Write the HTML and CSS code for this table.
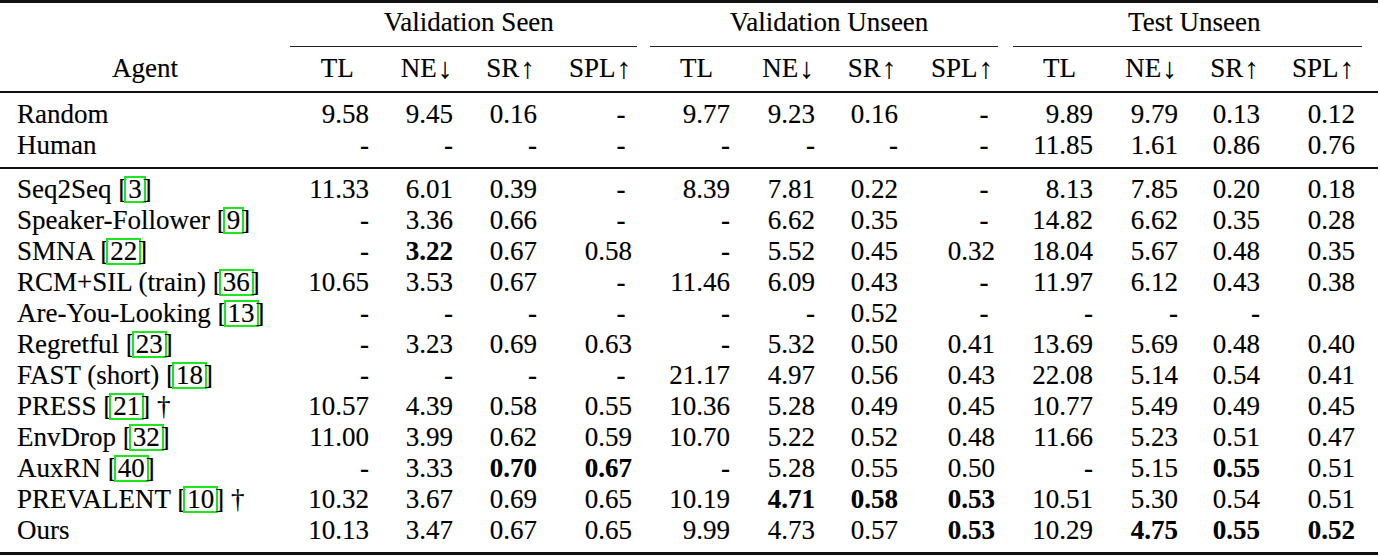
FILE: index.html
```html
<!DOCTYPE html>
<html lang="en">
<head>
<meta charset="utf-8">
<title>Results table</title>
<link rel="stylesheet" href="styles.css">
</head>
<body>
<div class="tbl">
  <div class="thead">
    <div class="row r-groups">
      <div class="a"></div>
      <div class="g g1">Validation Seen</div>
      <div class="g g2">Validation Unseen</div>
      <div class="g g3">Test Unseen</div>
    </div>
    <div class="row r-cmid">
      <div class="cm cm1"></div>
      <div class="cm cm2"></div>
      <div class="cm cm3"></div>
    </div>
    <div class="row r-cols">
      <div class="a ah">Agent</div>
      <div class="h">TL</div><div class="h">NE<span class="arr">↓</span></div><div class="h">SR<span class="arr">↑</span></div><div class="h">SPL<span class="arr">↑</span></div>
      <div class="h">TL</div><div class="h">NE<span class="arr">↓</span></div><div class="h">SR<span class="arr">↑</span></div><div class="h">SPL<span class="arr">↑</span></div>
      <div class="h">TL</div><div class="h">NE<span class="arr">↓</span></div><div class="h">SR<span class="arr">↑</span></div><div class="h l">SPL<span class="arr">↑</span></div>
    </div>
  </div>

  <div class="tbody base">
    <div class="row">
      <div class="a">Random</div>
      <div class="n">9.58</div><div class="n">9.45</div><div class="n">0.16</div><div class="n d">-</div>
      <div class="n">9.77</div><div class="n">9.23</div><div class="n">0.16</div><div class="n d">-</div>
      <div class="n">9.89</div><div class="n">9.79</div><div class="n">0.13</div><div class="n l">0.12</div>
    </div>
    <div class="row">
      <div class="a">Human</div>
      <div class="n">-</div><div class="n">-</div><div class="n">-</div><div class="n d">-</div>
      <div class="n">-</div><div class="n">-</div><div class="n">-</div><div class="n d">-</div>
      <div class="n">11.85</div><div class="n">1.61</div><div class="n">0.86</div><div class="n l">0.76</div>
    </div>
  </div>

  <div class="tbody methods">
    <div class="row">
      <div class="a">Seq2Seq [<span class="cite">3</span>]</div>
      <div class="n">11.33</div><div class="n">6.01</div><div class="n">0.39</div><div class="n d">-</div>
      <div class="n">8.39</div><div class="n">7.81</div><div class="n">0.22</div><div class="n d">-</div>
      <div class="n">8.13</div><div class="n">7.85</div><div class="n">0.20</div><div class="n l">0.18</div>
    </div>
    <div class="row">
      <div class="a">Speaker-Follower [<span class="cite">9</span>]</div>
      <div class="n">-</div><div class="n">3.36</div><div class="n">0.66</div><div class="n d">-</div>
      <div class="n">-</div><div class="n">6.62</div><div class="n">0.35</div><div class="n d">-</div>
      <div class="n">14.82</div><div class="n">6.62</div><div class="n">0.35</div><div class="n l">0.28</div>
    </div>
    <div class="row">
      <div class="a">SMNA [<span class="cite">22</span>]</div>
      <div class="n">-</div><div class="n"><b>3.22</b></div><div class="n">0.67</div><div class="n">0.58</div>
      <div class="n">-</div><div class="n">5.52</div><div class="n">0.45</div><div class="n">0.32</div>
      <div class="n">18.04</div><div class="n">5.67</div><div class="n">0.48</div><div class="n l">0.35</div>
    </div>
    <div class="row">
      <div class="a">RCM+SIL (train) [<span class="cite">36</span>]</div>
      <div class="n">10.65</div><div class="n">3.53</div><div class="n">0.67</div><div class="n d">-</div>
      <div class="n">11.46</div><div class="n">6.09</div><div class="n">0.43</div><div class="n d">-</div>
      <div class="n">11.97</div><div class="n">6.12</div><div class="n">0.43</div><div class="n l">0.38</div>
    </div>
    <div class="row">
      <div class="a">Are-You-Looking [<span class="cite">13</span>]</div>
      <div class="n">-</div><div class="n">-</div><div class="n">-</div><div class="n d">-</div>
      <div class="n">-</div><div class="n">-</div><div class="n">0.52</div><div class="n d">-</div>
      <div class="n">-</div><div class="n">-</div><div class="n">-</div><div class="n l"></div>
    </div>
    <div class="row">
      <div class="a">Regretful [<span class="cite">23</span>]</div>
      <div class="n">-</div><div class="n">3.23</div><div class="n">0.69</div><div class="n">0.63</div>
      <div class="n">-</div><div class="n">5.32</div><div class="n">0.50</div><div class="n">0.41</div>
      <div class="n">13.69</div><div class="n">5.69</div><div class="n">0.48</div><div class="n l">0.40</div>
    </div>
    <div class="row">
      <div class="a">FAST (short) [<span class="cite">18</span>]</div>
      <div class="n">-</div><div class="n">-</div><div class="n">-</div><div class="n d">-</div>
      <div class="n">21.17</div><div class="n">4.97</div><div class="n">0.56</div><div class="n">0.43</div>
      <div class="n">22.08</div><div class="n">5.14</div><div class="n">0.54</div><div class="n l">0.41</div>
    </div>
    <div class="row">
      <div class="a">PRESS [<span class="cite">21</span>] †</div>
      <div class="n">10.57</div><div class="n">4.39</div><div class="n">0.58</div><div class="n">0.55</div>
      <div class="n">10.36</div><div class="n">5.28</div><div class="n">0.49</div><div class="n">0.45</div>
      <div class="n">10.77</div><div class="n">5.49</div><div class="n">0.49</div><div class="n l">0.45</div>
    </div>
    <div class="row">
      <div class="a">EnvDrop [<span class="cite">32</span>]</div>
      <div class="n">11.00</div><div class="n">3.99</div><div class="n">0.62</div><div class="n">0.59</div>
      <div class="n">10.70</div><div class="n">5.22</div><div class="n">0.52</div><div class="n">0.48</div>
      <div class="n">11.66</div><div class="n">5.23</div><div class="n">0.51</div><div class="n l">0.47</div>
    </div>
    <div class="row">
      <div class="a">AuxRN [<span class="cite">40</span>]</div>
      <div class="n">-</div><div class="n">3.33</div><div class="n"><b>0.70</b></div><div class="n"><b>0.67</b></div>
      <div class="n">-</div><div class="n">5.28</div><div class="n">0.55</div><div class="n">0.50</div>
      <div class="n">-</div><div class="n">5.15</div><div class="n"><b>0.55</b></div><div class="n l">0.51</div>
    </div>
    <div class="row">
      <div class="a">PREVALENT [<span class="cite">10</span>] †</div>
      <div class="n">10.32</div><div class="n">3.67</div><div class="n">0.69</div><div class="n">0.65</div>
      <div class="n">10.19</div><div class="n"><b>4.71</b></div><div class="n"><b>0.58</b></div><div class="n"><b>0.53</b></div>
      <div class="n">10.51</div><div class="n">5.30</div><div class="n">0.54</div><div class="n l">0.51</div>
    </div>
    <div class="row">
      <div class="a">Ours</div>
      <div class="n">10.13</div><div class="n">3.47</div><div class="n">0.67</div><div class="n">0.65</div>
      <div class="n">9.99</div><div class="n">4.73</div><div class="n">0.57</div><div class="n"><b>0.53</b></div>
      <div class="n">10.29</div><div class="n"><b>4.75</b></div><div class="n"><b>0.55</b></div><div class="n l"><b>0.52</b></div>
    </div>
  </div>
</div>
</body>
</html>
```
FILE: styles.css
```css
html, body {
  margin: 0;
  padding: 0;
  background: #ffffff;
}

body {
  color: #000;
  font-family: "Liberation Serif", "Times New Roman", Times, serif;
  font-size: 27px;
  -webkit-text-stroke: 0.15px #000;
}

.tbl {
  width: 1378px;
  border-top: 3px solid #111;
  border-bottom: 3px solid #111;
}

.row {
  display: grid;
  grid-template-columns: 290px 94.5px 84px 84px 95px 98px 85px 83px 97px 98px 85px 82px 102.5px;
  line-height: 31px;
  white-space: nowrap;
}

/* header block */
.thead {
  padding-top: 4px;
  padding-bottom: 7px;
  border-bottom: 2px solid #111;
}

.g {
  text-align: center;
}
.g1 { grid-column: 2 / 6; }
.g2 { grid-column: 6 / 10; }
.g3 { grid-column: 10 / 14; }

.r-cmid {
  padding-top: 7.5px;
  line-height: 0;
}
.cm {
  height: 0;
  border-top: 1px solid #222;
}
.cm1 { grid-column: 2 / 6; margin-right: 10.5px; }
.cm2 { grid-column: 6 / 10; margin-left: 2.5px; margin-right: 12.5px; }
.cm3 { grid-column: 10 / 14; margin-left: 2.5px; margin-right: 16px; }

.r-cols {
  padding-top: 6.4px;
}

.h {
  text-align: center;
  padding: 0 15.5px;
}
.h.l {
  padding-right: 23px;
}

/* math-style arrows */
.arr {
  margin-left: 1px;
  font-size: 29px;
  line-height: 0;
  vertical-align: -1px;
}

/* agent column */
.a {
  padding-left: 17px;
}
.a.ah {
  padding-left: 0;
  text-align: center;
}

/* numeric cells */
.n {
  text-align: right;
  padding-right: 15.5px;
}
.n.d {
  padding-right: 22px;
}
.n.l {
  padding-right: 23px;
}

b {
  font-weight: bold;
}

/* body groups */
.base {
  padding-top: 6px;
  padding-bottom: 6.5px;
  border-bottom: 2px solid #111;
}
.methods {
  padding-top: 4.5px;
  padding-bottom: 6.5px;
}

/* hyperref-style citation box */
.cite {
  display: inline-block;
  line-height: 23px;
  padding: 0 2px;
  margin: 0 -3px 0 -3px;
  border: 2px solid #1ee61e;
}
```
